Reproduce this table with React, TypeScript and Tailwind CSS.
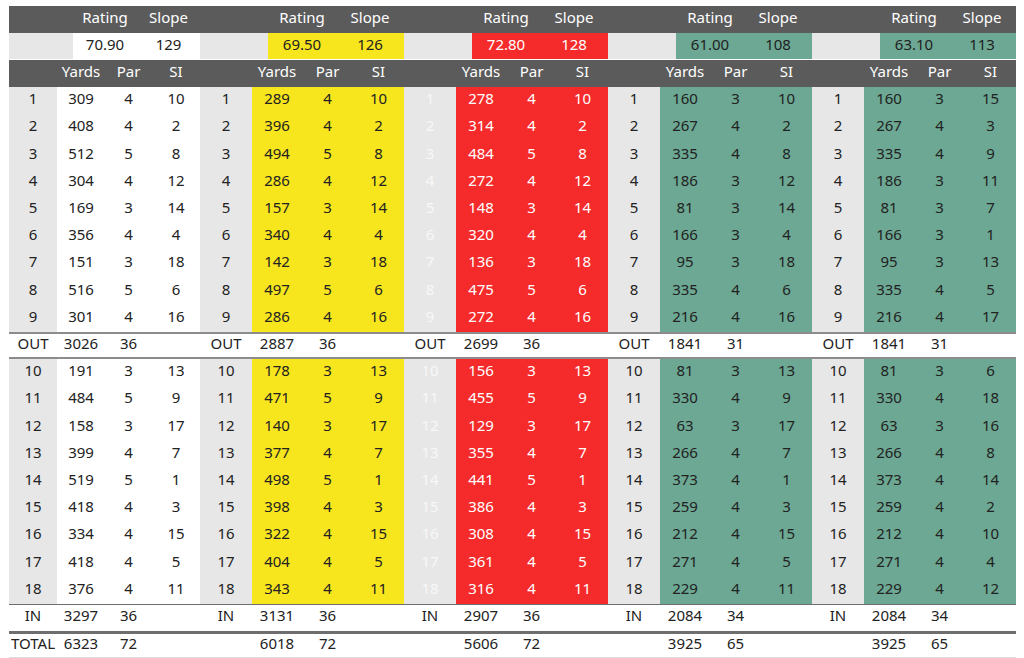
import React from "react";

type Group = {
  holeW: string;
  colW: [string, string, string];
  ratW: [string, string, string];
  bg: string;
  text: string;
  holeText: string;
  rating: string;
  slope: string;
  front: [number, number, number][];
  back: [number, number, number][];
  out: [number, number];
  inn: [number, number];
  total: [number, number];
};

const groups: Group[] = [
  {
    holeW: "w-[48px]",
    colW: ["w-[48px]", "w-[47px]", "w-[48px]"],
    ratW: ["w-[64px]", "w-[64px]", "w-[63px]"],
    bg: "bg-white",
    text: "text-[#222]",
    holeText: "text-[#222]",
    rating: "70.90",
    slope: "129",
    front: [[309,4,10],[408,4,2],[512,5,8],[304,4,12],[169,3,14],[356,4,4],[151,3,18],[516,5,6],[301,4,16]],
    back: [[191,3,13],[484,5,9],[158,3,17],[399,4,7],[519,5,1],[418,4,3],[334,4,15],[418,4,5],[376,4,11]],
    out: [3026, 36],
    inn: [3297, 36],
    total: [6323, 72],
  },
  {
    holeW: "w-[52px]",
    colW: ["w-[50px]", "w-[51px]", "w-[51px]"],
    ratW: ["w-[68px]", "w-[68px]", "w-[68px]"],
    bg: "bg-[#f7e51e]",
    text: "text-[#222]",
    holeText: "text-[#222]",
    rating: "69.50",
    slope: "126",
    front: [[289,4,10],[396,4,2],[494,5,8],[286,4,12],[157,3,14],[340,4,4],[142,3,18],[497,5,6],[286,4,16]],
    back: [[178,3,13],[471,5,9],[140,3,17],[377,4,7],[498,5,1],[398,4,3],[322,4,15],[404,4,5],[343,4,11]],
    out: [2887, 36],
    inn: [3131, 36],
    total: [6018, 72],
  },
  {
    holeW: "w-[52px]",
    colW: ["w-[50px]", "w-[51px]", "w-[51px]"],
    ratW: ["w-[68px]", "w-[68px]", "w-[68px]"],
    bg: "bg-[#f52b2b]",
    text: "text-white",
    holeText: "text-[#f8f8f8]",
    rating: "72.80",
    slope: "128",
    front: [[278,4,10],[314,4,2],[484,5,8],[272,4,12],[148,3,14],[320,4,4],[136,3,18],[475,5,6],[272,4,16]],
    back: [[156,3,13],[455,5,9],[129,3,17],[355,4,7],[441,5,1],[386,4,3],[308,4,15],[361,4,5],[316,4,11]],
    out: [2699, 36],
    inn: [2907, 36],
    total: [5606, 72],
  },
  {
    holeW: "w-[52px]",
    colW: ["w-[50px]", "w-[51px]", "w-[51px]"],
    ratW: ["w-[68px]", "w-[68px]", "w-[68px]"],
    bg: "bg-[#6ca893]",
    text: "text-[#222]",
    holeText: "text-[#222]",
    rating: "61.00",
    slope: "108",
    front: [[160,3,10],[267,4,2],[335,4,8],[186,3,12],[81,3,14],[166,3,4],[95,3,18],[335,4,6],[216,4,16]],
    back: [[81,3,13],[330,4,9],[63,3,17],[266,4,7],[373,4,1],[259,4,3],[212,4,15],[271,4,5],[229,4,11]],
    out: [1841, 31],
    inn: [2084, 34],
    total: [3925, 65],
  },
  {
    holeW: "w-[52px]",
    colW: ["w-[50px]", "w-[51px]", "w-[51px]"],
    ratW: ["w-[68px]", "w-[68px]", "w-[68px]"],
    bg: "bg-[#6ca893]",
    text: "text-[#222]",
    holeText: "text-[#222]",
    rating: "63.10",
    slope: "113",
    front: [[160,3,15],[267,4,3],[335,4,9],[186,3,11],[81,3,7],[166,3,1],[95,3,13],[335,4,5],[216,4,17]],
    back: [[81,3,6],[330,4,18],[63,3,16],[266,4,8],[373,4,14],[259,4,2],[212,4,10],[271,4,4],[229,4,12]],
    out: [1841, 31],
    inn: [2084, 34],
    total: [3925, 65],
  },
];

const cell = "flex items-center justify-center shrink-0 pb-[4px]";

function HoleRow({ idx, half }: { idx: number; half: "front" | "back" }) {
  return (
    <div className="flex h-[27.22px]">
      {groups.map((g, gi) => {
        const r = g[half][idx];
        const hole = half === "front" ? idx + 1 : idx + 10;
        return (
          <div key={gi} className="flex h-full">
            <div className={`${cell} ${g.holeW} bg-[#e7e7e7] ${g.holeText}`}>{hole}</div>
            <div className={`flex h-full ${g.bg} ${g.text}`}>
              <div className={`${cell} ${g.colW[0]}`}>{r[0]}</div>
              <div className={`${cell} ${g.colW[1]}`}>{r[1]}</div>
              <div className={`${cell} ${g.colW[2]}`}>{r[2]}</div>
            </div>
          </div>
        );
      })}
    </div>
  );
}

function SumRow({ label, kind }: { label: string; kind: "out" | "inn" | "total" }) {
  return (
    <div className="flex h-full bg-white text-[#222]">
      {groups.map((g, gi) => {
        const v = g[kind];
        const lab = kind === "total" ? (gi === 0 ? label : "") : label;
        return (
          <div key={gi} className="flex h-full">
            <div className={`${cell} ${g.holeW}`}>{lab}</div>
            <div className={`${cell} ${g.colW[0]}`}>{v[0]}</div>
            <div className={`${cell} ${g.colW[1]}`}>{v[1]}</div>
            <div className={`${cell} ${g.colW[2]}`}></div>
          </div>
        );
      })}
    </div>
  );
}

export default function App() {
  return (
    <div
      className="w-[1024px] h-[658px] bg-white overflow-hidden pt-[6px] pl-[9px] text-[15px] leading-none"
      style={{ fontFamily: '"Noto Sans", "Open Sans", sans-serif' }}
    >
      <div className="w-[1007px] flex flex-col">
        {/* Rating / Slope header */}
        <div className="flex h-[27px] bg-[#5b5b5b] text-white">
          {groups.map((g, gi) => (
            <div key={gi} className="flex h-full">
              <div className={`${cell} ${g.ratW[0]}`}></div>
              <div className={`${cell} ${g.ratW[1]}`}>Rating</div>
              <div className={`${cell} ${g.ratW[2]}`}>Slope</div>
            </div>
          ))}
        </div>
        {/* Rating values */}
        <div className="flex h-[26px]">
          {groups.map((g, gi) => (
            <div key={gi} className="flex h-full">
              <div className={`${cell} ${g.ratW[0]} bg-[#e7e7e7]`}></div>
              <div className={`flex h-full ${g.bg} ${g.text}`}>
                <div className={`${cell} ${g.ratW[1]}`}>{g.rating}</div>
                <div className={`${cell} ${g.ratW[2]}`}>{g.slope}</div>
              </div>
            </div>
          ))}
        </div>
        <div className="h-[1px] bg-white" />
        {/* Yards / Par / SI header */}
        <div className="flex h-[27px] bg-[#5b5b5b] text-white">
          {groups.map((g, gi) => (
            <div key={gi} className="flex h-full">
              <div className={`${cell} ${g.holeW}`}></div>
              <div className={`${cell} ${g.colW[0]}`}>Yards</div>
              <div className={`${cell} ${g.colW[1]}`}>Par</div>
              <div className={`${cell} ${g.colW[2]}`}>SI</div>
            </div>
          ))}
        </div>
        {Array.from({ length: 9 }).map((_, i) => (
          <HoleRow key={`f${i}`} idx={i} half="front" />
        ))}
        <div className="h-[27px] border-t-2 border-b-2 border-[#8c8c8c]">
          <SumRow label="OUT" kind="out" />
        </div>
        {Array.from({ length: 9 }).map((_, i) => (
          <HoleRow key={`b${i}`} idx={i} half="back" />
        ))}
        <div className="h-[27px] border-t border-[#6e6e6e]">
          <SumRow label="IN" kind="inn" />
        </div>
        <div className="h-[27px] border-t-[3px] border-b border-t-[#6e6e6e] border-b-[#dcdcdc]">
          <SumRow label="TOTAL" kind="total" />
        </div>
      </div>
    </div>
  );
}
